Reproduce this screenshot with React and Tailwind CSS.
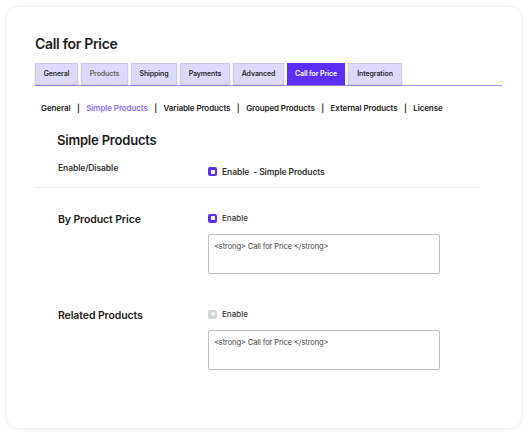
const tabs = [
  { label: 'General', w: 'w-[43px]' },
  { label: 'Products', w: 'w-[47px]' },
  { label: 'Shipping', w: 'w-[46px]' },
  { label: 'Payments', w: 'w-[50px]' },
  { label: 'Advanced', w: 'w-[51px]' },
  { label: 'Call for Price', w: 'w-[58px]' },
  { label: 'Integration', w: 'w-[54px]' },
];
const subnav = ['General', 'Simple Products', 'Variable Products', 'Grouped Products', 'External Products', 'License'];

function Check({ on }) {
  return (
    <span
      className={`flex h-[9px] w-[9px] items-center justify-center rounded-[2px] ${on ? 'bg-[#5b2ff5]' : 'bg-[#d4d4d4]'}`}
    >
      <span className={`h-[4px] w-[4px] ${on ? 'bg-white' : 'bg-[#ececec]'}`} />
    </span>
  );
}

function Field({ label, on }) {
  return (
    <div className="flex">
      <div className="w-[173px] pl-[23px] text-[10.5px] font-semibold tracking-[-0.1px] text-[#222]">{label}</div>
      <div className="flex flex-col">
        <div className="flex items-center gap-[5px] text-[8px] font-medium text-[#333]">
          <Check on={on} />
          Enable
        </div>
        <div className="mt-[10px] h-[40px] w-[232px] rounded-[2px] border border-[#bdbdbd] px-[5px] py-[6px] text-[7.5px] tracking-[-0.1px] text-[#444]">
          {'<strong> Call for Price </strong>'}
        </div>
      </div>
    </div>
  );
}

export default function App() {
  return (
    <div
      className="h-[437px] w-[530px] bg-white p-[7px]"
      style={{ fontFamily: 'Inter, "DejaVu Sans", sans-serif' }}
    >
      <div className="h-[421px] w-[514px] rounded-[12px] bg-white pl-[28px] pt-[28px] shadow-[0_0_6px_rgba(0,0,0,0.12)]">
        <h1 className="text-[14px] font-semibold leading-[18px] tracking-[-0.3px] text-[#1d1d1d]">Call for Price</h1>

        <div className="mt-[10px] flex w-[467px] gap-[3px] border-b-[1.5px] border-[#a78bfa]">
          {tabs.map((t) => {
            const active = t.label === 'Call for Price';
            return (
              <div
                key={t.label}
                className={`flex h-[22px] items-center justify-center ${t.w} text-[7px] font-semibold tracking-[-0.1px] shadow-[0_1px_2px_rgba(0,0,0,0.15)] ${
                  active
                    ? 'border border-[#5b2ff5] bg-[#5b2ff5] text-white'
                    : `border border-[#cfcbe0] bg-[#ddd8ff] ${t.label === 'Products' ? 'text-[#666]' : 'text-[#2a2a2a]'}`
                }`}
              >
                {t.label}
              </div>
            );
          })}
        </div>

        <div className="mt-[16px] flex items-center pl-[6px] text-[8px] font-semibold tracking-[-0.1px] text-[#222]">
          {subnav.map((s, i) => (
            <span key={s} className="flex items-center">
              {i > 0 && <span className="mx-[6.5px]">|</span>}
              <span className={s === 'Simple Products' ? 'text-[#8b6cf6]' : ''}>{s}</span>
            </span>
          ))}
        </div>

        <div className="mt-[17px] pl-[22px] text-[13px] font-semibold tracking-[-0.2px] text-[#1d1d1d]">Simple Products</div>

        <div className="mt-[11px] flex">
          <div className="w-[173px] pl-[23px] text-[8.5px] font-semibold tracking-[-0.1px] text-[#333]">Enable/Disable</div>
          <div className="flex items-center gap-[5px] pt-[4px] text-[8.5px] font-semibold tracking-[-0.1px] text-[#333]">
            <Check on />
            <span>Enable&nbsp; - Simple Products</span>
          </div>
        </div>

        <div className="mt-[9px] h-[1px] w-[445px] bg-[#ececec]" />

        <div className="mt-[24px]">
          <Field label="By Product Price" on />
        </div>
        <div className="mt-[34px]">
          <Field label="Related Products" on={false} />
        </div>
      </div>
    </div>
  );
}
